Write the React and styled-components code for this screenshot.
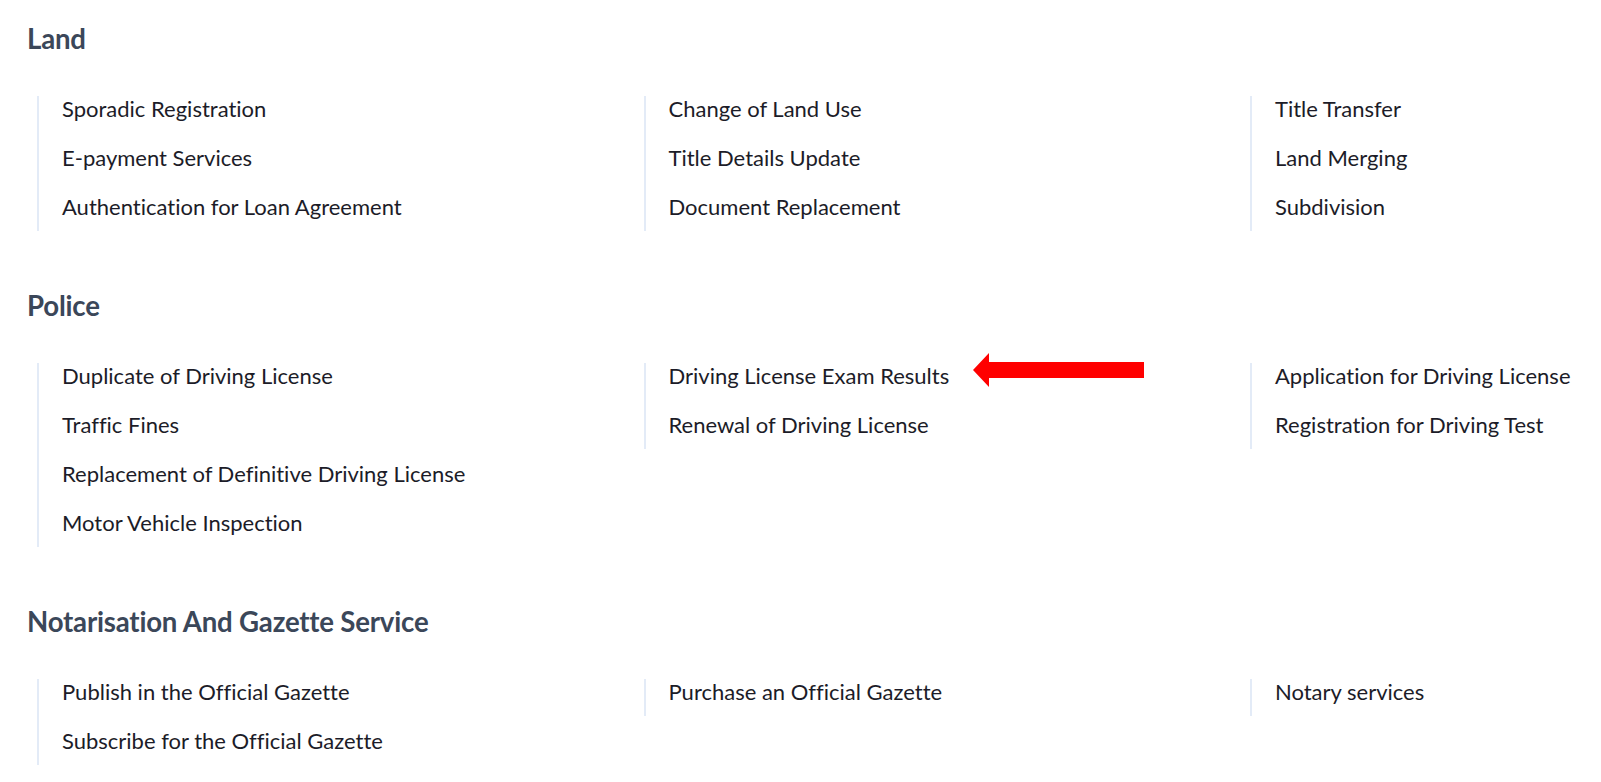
import React from 'react';
import styled, { createGlobalStyle } from 'styled-components';

const COLORS = {
  heading: '#3b4759',
  text: '#1c1c28',
  rule: '#e3ebf7',
  arrow: '#ff0000',
};

const SECTIONS = [
  {
    title: 'Land',
    columns: [
      ['Sporadic Registration', 'E-payment Services', 'Authentication for Loan Agreement'],
      ['Change of Land Use', 'Title Details Update', 'Document Replacement'],
      ['Title Transfer', 'Land Merging', 'Subdivision'],
    ],
  },
  {
    title: 'Police',
    columns: [
      [
        'Duplicate of Driving License',
        'Traffic Fines',
        'Replacement of Definitive Driving License',
        'Motor Vehicle Inspection',
      ],
      ['Driving License Exam Results', 'Renewal of Driving License'],
      ['Application for Driving License', 'Registration for Driving Test'],
    ],
  },
  {
    title: 'Notarisation And Gazette Service',
    columns: [
      ['Publish in the Official Gazette', 'Subscribe for the Official Gazette'],
      ['Purchase an Official Gazette'],
      ['Notary services'],
    ],
  },
];

const HIGHLIGHTED = 'Driving License Exam Results';

const GlobalStyle = createGlobalStyle`
  html, body {
    margin: 0;
    background: #ffffff;
  }
  body {
    font-family: Lato, "Noto Sans", "Liberation Sans", sans-serif;
    font-variant-ligatures: no-common-ligatures;
  }
`

const Page = styled.main`
  padding: 19px 0 0 27px;
`

const Section = styled.section`
  margin-bottom: 55px;
`

const Heading = styled.h2`
  margin: 0 0 37px;
  font-size: 27.6px;
  line-height: 40px;
  font-weight: 700;
  color: ${COLORS.heading};
  letter-spacing: -0.2px;
`

const Columns = styled.div`
  display: grid;
  grid-template-columns: 606.5px 606.5px 1fr;
  align-items: start;
  margin-left: 10px;
`

const List = styled.ul`
  list-style: none;
  margin: 0;
  padding: 0 0 11px 23px;
  border-left: 2px solid ${COLORS.rule};
  display: flex;
  flex-direction: column;
  gap: 23px;
`

const Item = styled.li`
  position: relative;
  font-size: 22px;
  line-height: 26px;
  color: ${COLORS.text};
  white-space: nowrap;
`

const Arrow = styled.svg`
  position: absolute;
  left: 304px;
  top: -10px;
  width: 171px;
  height: 34px;
`

const PointerArrow = () => (
  <Arrow viewBox="0 0 171 34" aria-hidden="true">
    <polygon points="0,17 16,0 16,9 171,9 171,25 16,25 16,34" fill={COLORS.arrow} />
  </Arrow>
)

const App = () => (
  <>
    <GlobalStyle />
    <Page>
      {SECTIONS.map((section) => (
        <Section key={section.title}>
          <Heading>{section.title}</Heading>
          <Columns>
            {section.columns.map((items, i) => (
              <List key={i}>
                {items.map((label) => (
                  <Item key={label}>
                    {label}
                    {label === HIGHLIGHTED && <PointerArrow />}
                  </Item>
                ))}
              </List>
            ))}
          </Columns>
        </Section>
      ))}
    </Page>
  </>
);

export default App;
